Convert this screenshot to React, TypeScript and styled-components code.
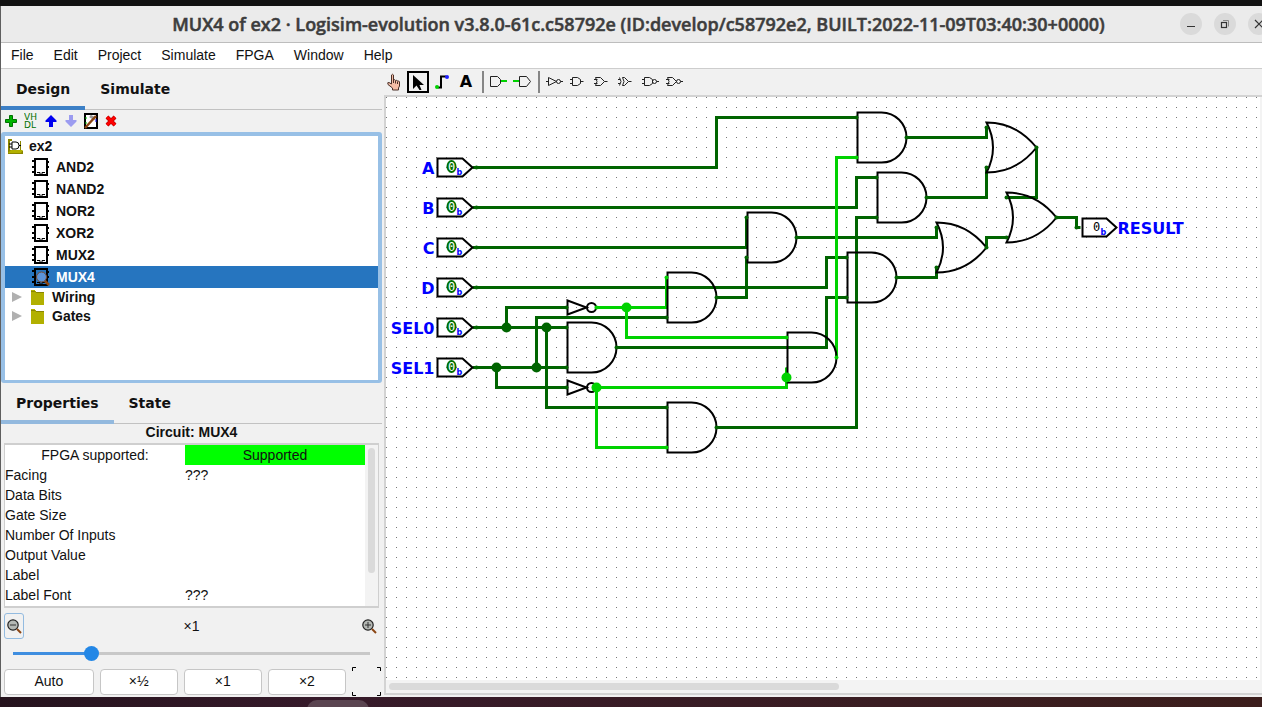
import React, { useState } from "react";
import styled, { createGlobalStyle } from "styled-components";

const SANS = '"Liberation Sans", Arial, sans-serif';
const UI_BOLD = '"DejaVu Sans", "Noto Sans", sans-serif';
const LOW = "#006400";
const HIGH = "#00d200";

const Global = createGlobalStyle`
  * { box-sizing: border-box; }
  html, body { margin: 0; padding: 0; overflow: hidden; }
  body { font: 14px/20px ${SANS}; color: #111; background: #2a1420; }
  button { font: inherit; color: inherit; border: 0; padding: 0; background: none; }
  svg { display: block; }
`;

const Desktop = styled.div`
  display: flex;
  flex-direction: column;
  height: 100vh;
  background: #121212;
  padding-top: 6px;
  overflow: hidden;
`;
const Window = styled.div`
  flex: 1;
  min-height: 0;
  display: flex;
  flex-direction: column;
  border-left: 1px solid #5e5e5e;
  background: #f1f1f1;
`;
const TitleBar = styled.header`
  display: grid;
  grid-template-columns: 1fr auto 1fr;
  align-items: center;
  height: 37px;
  margin-right: -15px;
  padding-right: 7px;
  background: #ebebeb;
  border-bottom: 1px solid #bdbdbd;
`;
const Title = styled.h1`
  grid-column: 2;
  margin: 0;
  padding-left: 6px;
  font: 600 18px/24px "Open Sans", "Noto Sans", sans-serif;
  color: #3d3d3d;
  -webkit-text-stroke: 0.5px #3d3d3d;
  white-space: nowrap;
`;
const WindowButtons = styled.div`
  display: flex;
  justify-content: flex-end;
  gap: 12px;
`;
const RoundButton = styled.button`
  width: 22px;
  height: 22px;
  border-radius: 50%;
  background: #dadada;
`;
const MenuBar = styled.nav`
  display: flex;
  height: 26px;
  background: #fff;
  border-bottom: 1px solid #cdcdcd;
`;
const MenuItem = styled.button`
  padding: 0 10px 2px;
`;
const Main = styled.main`
  flex: 1;
  min-height: 0;
  display: flex;
`;
const Side = styled.aside`
  width: 381px;
  flex: none;
  display: flex;
  flex-direction: column;
`;
const Tabs = styled.div`
  display: flex;
  height: 41px;
  flex: none;
  box-shadow: inset 0 -1px #c2c2c2;
`;
const Tab = styled.button<{ $line?: string }>`
  padding: 4px 15px 0;
  font: 700 14px/33px ${UI_BOLD};
  border-bottom: 4px solid ${(p) => p.$line ?? "transparent"};
`;
const ExplorerTools = styled.div`
  display: flex;
  align-items: center;
  height: 22px;
  padding-left: 2px;
  gap: 4px;
  flex: none;
`;
const ToolButton = styled.button<{ $w?: number }>`
  width: ${(p) => p.$w ?? 16}px;
  flex: none;
  display: flex;
  justify-content: center;
`;
const Tree = styled.ul`
  flex: 1;
  min-height: 0;
  margin: 0;
  padding: 0;
  list-style: none;
  background: #fff;
  border: 4px solid #98c0e6;
  border-bottom-width: 3px;
  border-radius: 3px;
  font-weight: 700;
  overflow: hidden;
`;
const TreeRow = styled.li<{ $kind: "root" | "circuit" | "library"; $on?: boolean }>`
  display: flex;
  align-items: center;
  height: ${(p) => ({ root: 20, circuit: 22, library: 19 })[p.$kind]}px;
  line-height: ${(p) => (p.$kind === "library" ? 18 : 20)}px;
  padding-left: ${(p) => ({ root: 3, circuit: 27, library: 7 })[p.$kind]}px;
  padding-bottom: ${(p) => (p.$kind === "library" ? 1 : 0)}px;
  gap: ${(p) => (p.$kind === "library" ? 8 : 6)}px;
  color: ${(p) => (p.$on ? "#fff" : "#111")};
  background: ${(p) => (p.$on ? "#2675bf" : "transparent")};
`;
const Caption = styled.h2`
  margin: 0;
  font: 700 14px/17px ${SANS};
  text-align: center;
`;
const PropsBox = styled.div`
  display: flex;
  flex: none;
  height: 165px;
  margin: 2px 3px 0;
  border: 2px solid #cfcfcf;
  border-width: 2px 1px;
  background: #fff;
  overflow: hidden;
`;
const PropsTable = styled.table`
  flex: 1;
  table-layout: fixed;
  border-collapse: collapse;
  height: 160px;
  th, td { padding: 0; width: 50%; height: 20px; text-align: left; font-weight: 400; }
`;
const Centered = styled.th<{ $green?: boolean }>`
  && { text-align: center; }
  background: ${(p) => (p.$green ? "#00ff00" : "transparent")};
`;
const ScrollTrack = styled.div`
  width: 13px;
  padding: 3px;
  background: #f3f3f3;
`;
const ScrollThumb = styled.div`
  height: 125px;
  border-radius: 4px;
  background: #dadada;
`;
const ZoomRow = styled.div`
  display: flex;
  align-items: center;
  justify-content: space-between;
  height: 36px;
  flex: none;
  padding: 0 3px;
`;
const ZoomButton = styled.button<{ $focus?: boolean }>`
  width: 20px;
  height: 26px;
  display: flex;
  align-items: center;
  justify-content: center;
  border: 1px solid ${(p) => (p.$focus ? "#93bbe0" : "transparent")};
  border-radius: 3px;
`;
const Slider = styled.input`
  appearance: none;
  flex: none;
  height: 16px;
  margin: 1px 12px 0;
  background: linear-gradient(90deg, #3f8ee0 21%, #c8c8c8 21%) center / 100% 3px no-repeat;
  &::-webkit-slider-thumb {
    appearance: none;
    width: 15px;
    height: 15px;
    border-radius: 50%;
    background: #2387e6;
  }
`;
const ZoomPresets = styled.div`
  display: flex;
  align-items: center;
  flex: none;
  height: 36px;
  padding: 5px 1px 0 3px;
  gap: 6px;
`;
const Preset = styled.button`
  flex: 1;
  height: 26px;
  padding-bottom: 2px;
  border: 1px solid #c6c6c6;
  border-radius: 4px;
  background: #fff;
  &:first-child { flex-grow: 1.15; }
`;
const Editor = styled.section`
  flex: 1;
  min-width: 0;
  display: flex;
  flex-direction: column;
`;
const EditorTools = styled.div`
  display: flex;
  align-items: center;
  height: 26px;
  padding-bottom: 1px;
  flex: none;
`;
const EditTool = styled.button<{ $on?: boolean }>`
  width: 22px;
  height: 22px;
  margin: 0 1px;
  flex: none;
  display: flex;
  align-items: center;
  justify-content: center;
  box-shadow: ${(p) => (p.$on ? "inset 0 0 0 2px #000" : "none")};
`;
const Divider = styled.div`
  width: 2px;
  height: 22px;
  margin: 0 2px 0 4px;
  background: #868686;
`;
const SheetFrame = styled.div`
  flex: 1;
  min-height: 0;
  display: flex;
  flex-direction: column;
  margin: 0 0 2px 2px;
  border: 2px solid #d3d3d3;
  border-right-width: 0;
  background: #fff;
`;
const SheetRow = styled.div`
  flex: 1;
  min-height: 0;
  display: flex;
  border-right: 2px solid #f3f3f3;
  svg { width: 100%; height: 100%; }
`;
const HScroll = styled.div`
  height: 13px;
  flex: none;
  padding: 3px;
  background: #f3f3f3;
`;
const HThumb = styled.div`
  width: 52%;
  max-width: 450px;
  height: 7px;
  border-radius: 4px;
  background: #dadada;
`;
const Dock = styled.footer`
  height: 10px;
  flex: none;
  background: linear-gradient(90deg, #25131d, #361a2a 25%, #3a1d22 70%, #3c1e1c);
  padding: 3px 0 0 307px;
  overflow: hidden;
`;
const DockItem = styled.div`
  width: 62px;
  height: 20px;
  border-radius: 10px;
  background: #5a4450;
`;

const ChipIcon = ({ viewed }: { viewed?: boolean }) => (
  <svg width="18" height="18" viewBox="0 0 18 18">
    <rect x="3" y="1" width="12" height="16" fill={viewed ? "none" : "#fff"} stroke="#000" strokeWidth="2" />
    <path d="M0 3h2M0 9h2M0 14h2M16 4h1M16 9h1" stroke="#000" strokeWidth="2" />
    <path d="M5 14.500h3v1.500M10 16v-1.500h3" fill="none" stroke="#000" />
    {viewed && (
      <>
        <circle cx="9.500" cy="9" r="5" fill="#5b93d8" stroke="#7a4a2c" />
        <path d="M13 13l4 4" stroke="#8b4513" strokeWidth="2.500" />
      </>
    )}
  </svg>
);
const ProjectIcon = () => (
  <svg width="15" height="15" viewBox="0 0 15 15">
    <path d="M0 0h4v2h9v10h2v3H0z" fill="#8a8500" />
    <path d="M2 2h10v9H2z" fill="#fff" />
    <path d="M0 14h13l2-3H3z" fill="#b2b000" />
    <path d="M4 3h4a3 3.500 0 0 1 0 7H4zM1 5h3M1 8h3M11 6.500h2" fill="none" stroke="#000" />
  </svg>
);
const FolderIcon = () => (
  <svg width="13" height="15" viewBox="0 0 13 15">
    <path d="M0 0h4v1h1v1h8v13H0z" fill="#b2b000" />
    <path d="M0 1.500h4l1 1h8" fill="none" stroke="#8a8500" />
  </svg>
);
const Expander = () => (
  <svg width="11" height="12" viewBox="0 0 11 12"><path d="M0 1l10 5-10 5z" fill="#b0b0b0" /></svg>
);
const Magnifier = ({ sign }: { sign: string }) => (
  <svg width="15" height="15" viewBox="0 0 15 15">
    <circle cx="6" cy="6" r="5.200" fill="#b4b8b4" stroke="#222" strokeWidth="1.200" />
    <path d={sign === "+" ? "M3 6h6M6 3v6" : "M3 6h6"} stroke="#333" />
    <path d="M10 10l4 4" stroke="#8b4513" strokeWidth="2" />
  </svg>
);

const circuits = ["AND2", "NAND2", "NOR2", "XOR2", "MUX2", "MUX4"];
const attributes = [
  ["Facing", "???"], ["Data Bits", ""], ["Gate Size", ""], ["Number Of Inputs", ""],
  ["Output Value", ""], ["Label", ""], ["Label Font", "???"],
];

type Pt = [number, number];
const lowWires = [
  "86,70 330,70 330,20 470,20", "86,110 470,110 470,80 490,80", "86,150 360,150 360,120",
  "86,190 440,190 440,160 460,160", "86,230 180,230", "120,230 120,210 180,210",
  "160,230 160,310 280,310", "86,270 180,270", "110,270 110,290 180,290",
  "150,270 150,220 280,220", "230,250 440,250 440,200 460,200", "330,200 360,200 360,160",
  "330,330 470,330 470,120 490,120", "520,40 600,40 600,30", "540,100 600,100 600,70",
  "650,50 650,100 620,100", "410,140 550,140 550,130", "510,180 550,180 550,170",
  "600,150 600,140 620,140", "670,120 690,120 690,130 694,130",
];
const highWires = [
  "210,210 280,210 280,180", "240,210 240,240 400,240", "210,290 400,290 400,270",
  "210,290 210,350 280,350", "450,260 450,60 470,60",
];
const lowPorts: Pt[] = [
  [90, 70], [90, 110], [90, 150], [90, 190], [90, 230], [90, 270], [470, 20], [490, 80], [490, 120],
  [360, 120], [360, 160], [460, 160], [460, 200], [180, 230], [180, 210], [280, 310], [180, 270],
  [180, 290], [280, 220], [230, 250], [330, 200], [330, 330], [520, 40], [600, 30], [540, 100],
  [600, 70], [650, 50], [620, 100], [410, 140], [550, 130], [510, 180], [550, 170], [600, 150],
  [620, 140], [670, 120], [690, 130],
];
const highPorts: Pt[] = [[210, 210], [280, 180], [400, 240], [280, 350], [450, 260], [470, 60]];
const lowJoints: Pt[] = [[120, 230], [160, 230], [110, 270], [150, 270]];
const highJoints: Pt[] = [[240, 210], [210, 290], [400, 280]];
const andGates: Pt[] = [[520, 40], [540, 100], [410, 140], [510, 180], [330, 200], [230, 250], [450, 260], [330, 330]];
const orGates: Pt[] = [[650, 50], [600, 150], [670, 120]];
const notGates: Pt[] = [[210, 210], [210, 290]];
const inputs: [string, number][] = [["A", 70], ["B", 110], ["C", 150], ["D", 190], ["SEL0", 230], ["SEL1", 270]];

const Wires = ({ list, color }: { list: string[]; color: string }) => (
  <g fill="none" stroke={color} strokeWidth="3">
    {list.map((p) => <polyline key={p} points={p} strokeLinejoin="miter" />)}
  </g>
);
const Dots = ({ list, color, r }: { list: Pt[]; color: string; r: number }) => (
  <g fill={color}>{list.map(([x, y]) => <circle key={`${x},${y}`} cx={x} cy={y} r={r} />)}</g>
);
const PinLabel = styled.text`
  font: 700 16px ${UI_BOLD};
  fill: #0000ff;
`;
const PinValue = styled.text`
  font: 12px "DejaVu Sans Mono", monospace;
  text-anchor: middle;
`;
const Radix = styled.text`
  font: 700 8px "DejaVu Sans", sans-serif;
  fill: #0000ff;
`;
const VhdlText = styled.text`
  font: 9px "DejaVu Sans", sans-serif;
  fill: #007000;
`;
const LetterIcon = styled.text`
  font: 700 16px "DejaVu Sans", sans-serif;
  text-anchor: middle;
`;

const Sheet = () => (
  <svg role="img" aria-label="MUX4 circuit">
    <defs>
      <pattern id="grid" width="10" height="10" patternUnits="userSpaceOnUse">
        <rect width="1" height="1" fill="#777" />
      </pattern>
    </defs>
    <rect width="100%" height="100%" fill="url(#grid)" />
    <g transform="translate(0.5 0.5)">
      <Wires list={lowWires} color={LOW} />
      <Wires list={highWires} color={HIGH} />
      <Dots list={lowJoints} color={LOW} r={5} />
      <g fill="none" stroke="#000" strokeWidth="2">
        {andGates.map(([x, y]) => (
          <path key={`${x},${y}`} transform={`translate(${x} ${y})`} d="M-25-25H-49V25H-25A25 25 0 0 0-25-25z" />
        ))}
        {orGates.map(([x, y]) => (
          <path key={`${x},${y}`} transform={`translate(${x} ${y})`} d="M0 0Q-20-25-50-25Q-37 0-50 25Q-20 25 0 0z" />
        ))}
        {notGates.map(([x, y]) => (
          <g key={`${x},${y}`} transform={`translate(${x} ${y})`}>
            <path d="M-29-7V7L-10 0z" />
            <circle cx="-5" cy="0" r="4.500" />
          </g>
        ))}
      </g>
      <Dots list={lowPorts} color={LOW} r={2} />
      <Dots list={highPorts} color={HIGH} r={2} />
      <Dots list={highJoints} color={HIGH} r={5} />
      {inputs.map(([name, y]) => (
        <g key={name} transform={`translate(90 ${y})`}>
          <path d="M-39-9H-14L-4 0L-14 9H-39z" fill="none" stroke="#000" strokeWidth="2" />
          <ellipse cx="-25" cy="-1" rx="5" ry="6.500" fill="#007000" />
          <PinValue x="-25" y="3" fill="#fff">0</PinValue>
          <Radix x="-20" y="7">b</Radix>
          <PinLabel x="-42" y="6" textAnchor="end">{name}</PinLabel>
        </g>
      ))}
      <g transform="translate(690 130)">
        <path d="M6-9H30L40 0L30 9H6z" fill="none" stroke="#000" strokeWidth="2" />
        <PinValue x="20" y="3" fill="#000">0</PinValue>
        <Radix x="24" y="7">b</Radix>
        <PinLabel x="41" y="6">RESULT</PinLabel>
      </g>
    </g>
  </svg>
);

const line = { fill: "none", stroke: "#222", strokeWidth: 1 };
const gateTools: [string, React.ReactNode][] = [
  ["NOT Gate", <><path d="M1 8.500h2M3.500 4.500v8l8-4zM15.500 8.500H18" /><circle cx="13.500" cy="8.500" r="2" /></>],
  ["AND Gate", <><path d="M1 6.500h2M1 10.500h2M3.500 4.500h5l3 2v4l-3 2h-5zM11.500 8.500h3" /></>],
  ["OR Gate", <><path d="M1 6.500h3.500M1 10.500h3.500M2.500 4.500h5l4 4l-4 4h-5q3-4 0-8M11.500 8.500h3" /></>],
  ["XOR Gate", <><path d="M1 6.500h2M1 10.500h2M5.500 4.500h2l4 4l-4 4h-2q3-4 0-8M2.500 4.500q3 4 0 8M11.500 8.500h3" /></>],
  ["NAND Gate", <><path d="M1 6.500h2M1 10.500h2M3.500 4.500h5l3 2v4l-3 2h-5zM15.500 8.500H18" /><circle cx="13.500" cy="8.500" r="2" /></>],
  ["NOR Gate", <><path d="M1 6.500h3.500M1 10.500h3.500M2.500 4.500h5l4 4l-4 4h-5q3-4 0-8M15.500 8.500H18" /><circle cx="13.500" cy="8.500" r="2" /></>],
];

export default function App() {
  const [zoom, setZoom] = useState(208);
  return (
    <>
      <Global />
      <Desktop>
        <Window>
          <TitleBar>
            <Title>MUX4 of ex2 · Logisim-evolution v3.8.0-61c.c58792e (ID:develop/c58792e2, BUILT:2022-11-09T03:40:30+0000)</Title>
            <WindowButtons>
              <RoundButton aria-label="Minimize">
                <svg width="22" height="22"><path d="M7 13.500h8" stroke="#333" /></svg>
              </RoundButton>
              <RoundButton aria-label="Restore">
                <svg width="22" height="22">
                  <rect x="7.500" y="9.500" width="5" height="5" fill="none" stroke="#333" strokeWidth="1.200" />
                  <path d="M9 7.500h5.500v6" fill="none" stroke="#888" />
                </svg>
              </RoundButton>
              <RoundButton aria-label="Close">
                <svg width="22" height="22"><path d="M7 7l8 8M15 7l-8 8" stroke="#333" strokeWidth="1.200" /></svg>
              </RoundButton>
            </WindowButtons>
          </TitleBar>
          <MenuBar>
            {["File", "Edit", "Project", "Simulate", "FPGA", "Window", "Help"].map((m) => <MenuItem key={m}>{m}</MenuItem>)}
          </MenuBar>
          <Main>
            <Side>
              <Tabs>
                <Tab $line="#3d80c6">Design</Tab>
                <Tab>Simulate</Tab>
              </Tabs>
              <ExplorerTools>
                <ToolButton aria-label="Add circuit">
                  <svg width="12" height="12"><path d="M4.500.5h3v4h4v3h-4v4h-3v-4h-4v-3h4z" fill="#00b400" stroke="#007000" /></svg>
                </ToolButton>
                <ToolButton aria-label="Add VHDL">
                  <svg width="14" height="16"><VhdlText x="0" y="7">VH</VhdlText><VhdlText x="0" y="15">DL</VhdlText></svg>
                </ToolButton>
                <ToolButton aria-label="Move up">
                  <svg width="12" height="12"><path d="M6 0l5.500 5.500V7H8v5H4V7H.5V5.500z" fill="#0000f0" /></svg>
                </ToolButton>
                <ToolButton aria-label="Move down">
                  <svg width="12" height="12"><path d="M6 12l5.500-5.500V5H8V0H4v5H.5v1.500z" fill="#9c9cf0" /></svg>
                </ToolButton>
                <ToolButton aria-label="Edit appearance">
                  <svg width="14" height="16">
                    <rect x="1" y="1" width="12" height="14" fill="#fff" stroke="#000" strokeWidth="2" />
                    <path d="M2 4v2M2 9v2" stroke="#00c000" /><path d="M12 6v3" stroke="#0000ff" />
                    <path d="M6 3l5 3" stroke="#999" strokeWidth="3" />
                    <path d="M1 15L12 3" stroke="#8b4513" strokeWidth="2.500" />
                  </svg>
                </ToolButton>
                <ToolButton aria-label="Delete">
                  <svg width="12" height="12"><path d="M2 2l8 8M10 2l-8 8" stroke="#a00" strokeWidth="4" /><path d="M2 2l8 8M10 2l-8 8" stroke="#f00" strokeWidth="3" /></svg>
                </ToolButton>
              </ExplorerTools>
              <Tree>
                <TreeRow $kind="root"><ProjectIcon />ex2</TreeRow>
                {circuits.map((c) => (
                  <TreeRow key={c} $kind="circuit" $on={c === "MUX4"}><ChipIcon viewed={c === "MUX4"} />{c}</TreeRow>
                ))}
                {["Wiring", "Gates"].map((l) => (
                  <TreeRow key={l} $kind="library"><Expander /><FolderIcon />{l}</TreeRow>
                ))}
              </Tree>
              <Tabs>
                <Tab $line="#93b9de">Properties</Tab>
                <Tab>State</Tab>
              </Tabs>
              <Caption>Circuit: MUX4</Caption>
              <PropsBox>
                <PropsTable>
                  <tbody>
                    <tr><Centered scope="row">FPGA supported:</Centered><Centered as="td" $green>Supported</Centered></tr>
                    {attributes.map(([k, v]) => <tr key={k}><th scope="row">{k}</th><td>{v}</td></tr>)}
                  </tbody>
                </PropsTable>
                <ScrollTrack><ScrollThumb /></ScrollTrack>
              </PropsBox>
              <ZoomRow>
                <ZoomButton aria-label="Zoom out" $focus><Magnifier sign="-" /></ZoomButton>
                <span>×1</span>
                <ZoomButton aria-label="Zoom in"><Magnifier sign="+" /></ZoomButton>
              </ZoomRow>
              <Slider type="range" aria-label="Zoom" max={1000} value={zoom} onChange={(e) => setZoom(Number(e.target.value))} />
              <ZoomPresets>
                {["Auto", "×½", "×1", "×2"].map((z) => <Preset key={z}>{z}</Preset>)}
                <ToolButton aria-label="Center view" $w={29}>
                  <svg width="29" height="29"><path d="M.5 4V.5H4M25 .5h3.500V4M28.500 25v3.500H25M4 28.500H.5V25" fill="none" stroke="#000" /></svg>
                </ToolButton>
              </ZoomPresets>
            </Side>
            <Editor>
              <EditorTools>
                <EditTool aria-label="Poke">
                  <svg width="16" height="18">
                    <path d="M5.500 11V2q1-1.500 2 0v5q1.500-1 2 .5q1.500-.8 2 .5q1.500-.5 2 1v4l-1 2v2h-6v-2L2 11.500Q1 9 3 9.500z" fill="#f4bda6" stroke="#4a3028" />
                    <path d="M7.500 7v3M9.500 8v2.500M11.500 8.500V11" stroke="#4a3028" />
                  </svg>
                </EditTool>
                <EditTool aria-label="Select" $on>
                  <svg width="16" height="18"><path d="M3 2v14l3.500-3.500l3 4.500h2l-2-5H14z" fill="#000" /></svg>
                </EditTool>
                <EditTool aria-label="Wire">
                  <svg width="16" height="16">
                    <path d="M4 13.500h3v-11h5" fill="none" stroke="#000" strokeWidth="2" />
                    <circle cx="3" cy="13" r="2" fill={HIGH} /><circle cx="13" cy="3" r="2" fill="#2020ff" />
                  </svg>
                </EditTool>
                <EditTool aria-label="Text">
                  <svg width="20" height="22"><LetterIcon x="10" y="16">A</LetterIcon></svg>
                </EditTool>
                <Divider />
                <EditTool aria-label="Input pin">
                  <svg width="18" height="14" {...line}><path d="M1.500 1.500h7l3 3v4l-3 3h-7z" /><path d="M12 6h6" stroke={HIGH} strokeWidth="2" /></svg>
                </EditTool>
                <EditTool aria-label="Output pin">
                  <svg width="18" height="14" {...line}><path d="M6.500 1.500h7l4 5l-4 5h-7z" /><path d="M0 6h6" stroke={HIGH} strokeWidth="2" /></svg>
                </EditTool>
                <Divider />
                {gateTools.map(([name, art]) => (
                  <EditTool key={name} aria-label={name}><svg width="18" height="17" {...line}>{art}</svg></EditTool>
                ))}
              </EditorTools>
              <SheetFrame>
                <SheetRow><Sheet /></SheetRow>
                <HScroll><HThumb /></HScroll>
              </SheetFrame>
            </Editor>
          </Main>
        </Window>
        <Dock><DockItem /></Dock>
      </Desktop>
    </>
  );
}
